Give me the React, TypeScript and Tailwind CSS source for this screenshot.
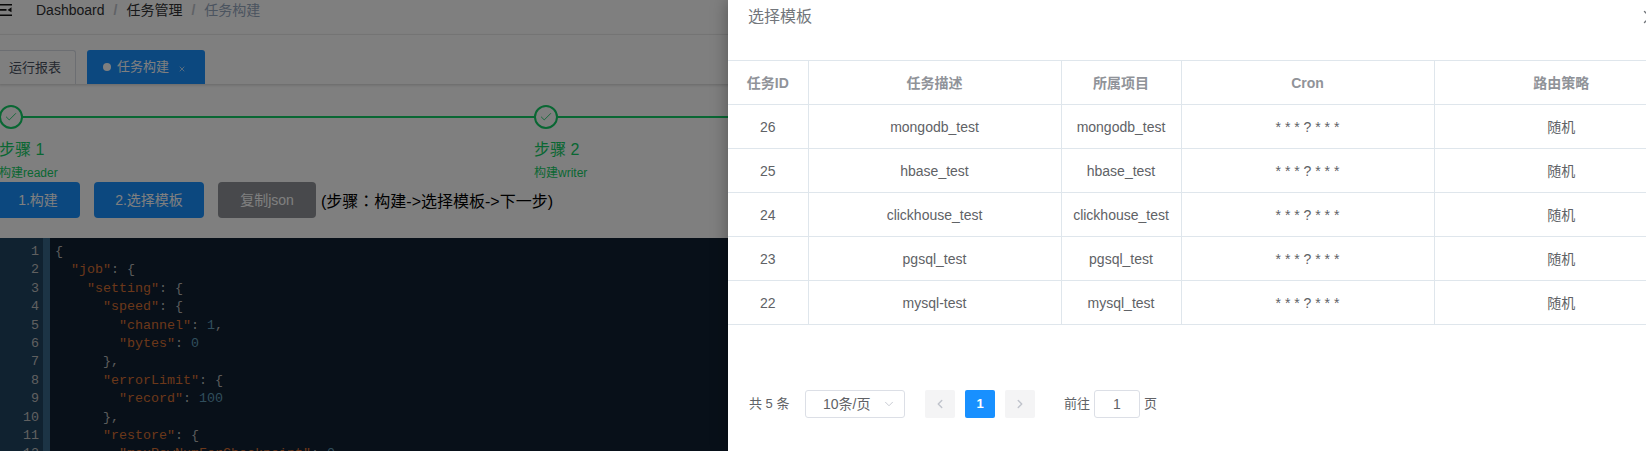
import { Check, ChevronDown, ChevronLeft, ChevronRight, X } from "lucide-react";

const rows = [
  { id: 26, desc: "mongodb_test", project: "mongodb_test" },
  { id: 25, desc: "hbase_test", project: "hbase_test" },
  { id: 24, desc: "clickhouse_test", project: "clickhouse_test" },
  { id: 23, desc: "pgsql_test", project: "pgsql_test" },
  { id: 22, desc: "mysql-test", project: "mysql_test" },
];

type Piece = { t: string; c?: "s" | "n" };

const code: Piece[][] = [
  [{ t: "{" }],
  [{ t: "  " }, { t: '"job"', c: "s" }, { t: ": {" }],
  [{ t: "    " }, { t: '"setting"', c: "s" }, { t: ": {" }],
  [{ t: "      " }, { t: '"speed"', c: "s" }, { t: ": {" }],
  [{ t: "        " }, { t: '"channel"', c: "s" }, { t: ": " }, { t: "1", c: "n" }, { t: "," }],
  [{ t: "        " }, { t: '"bytes"', c: "s" }, { t: ": " }, { t: "0", c: "n" }],
  [{ t: "      }," }],
  [{ t: "      " }, { t: '"errorLimit"', c: "s" }, { t: ": {" }],
  [{ t: "        " }, { t: '"record"', c: "s" }, { t: ": " }, { t: "100", c: "n" }],
  [{ t: "      }," }],
  [{ t: "      " }, { t: '"restore"', c: "s" }, { t: ": {" }],
  [{ t: "        " }, { t: '"maxRowNumForCheckpoint"', c: "s" }, { t: ": " }, { t: "0", c: "n" }, { t: "," }],
];

function Step({ title, desc }: { title: string; desc: string }) {
  return (
    <div className="w-[535px] shrink-0">
      <div className="relative h-6">
        <div className="absolute left-0 right-0 top-[11px] h-[2px] bg-[#13ce66]" />
        <div className="relative flex h-6 w-6 items-center justify-center rounded-full border-2 border-[#13ce66] bg-[#fff]">
          <Check size={14} strokeWidth={1.5} className="text-[#13ce66]" />
        </div>
      </div>
      <div className="mt-[2px] text-base leading-[38px] text-[#13ce66]">{title}</div>
      <div className="-mt-[6px] text-xs leading-[20px] text-[#13ce66]">{desc}</div>
    </div>
  );
}

export default function App() {
  return (
    <div className="relative h-[451px] w-[1646px] overflow-hidden bg-white font-['Liberation_Sans','Noto_Sans_CJK_SC',sans-serif]">
      {/* page behind the drawer, scrolled a little to the right and down */}
      <div className="-mt-[15px] -ml-[1px] w-[1647px]">
        <div className="flex h-[50px] items-center border-b border-[#f0f0f0] pl-[1px]">
          <svg width="12" height="14" viewBox="0 0 12 14" className="shrink-0 text-[#111]">
            <path d="M0 1h12v1.6H0zM0 6h6.5v1.8H0zM0 11.4h12V13H0z" fill="currentColor" />
            <path d="M11.5 4.2v5L7.5 6.9z" fill="currentColor" />
          </svg>
          <div className="ml-[24px] flex items-center pt-px text-sm text-[#303133]">
            <span>Dashboard</span>
            <span className="mx-[9px] font-bold text-[#c0c4cc]">/</span>
            <span>任务管理</span>
            <span className="mx-[9px] font-bold text-[#c0c4cc]">/</span>
            <span className="text-[#97a8be]">任务构建</span>
          </div>
        </div>
        <div className="flex h-[49px] items-end gap-[11px] shadow-[0_1px_3px_rgba(0,0,0,0.2)]">
          <div className="-ml-[20px] flex h-[34px] w-[97px] items-center justify-end rounded-t-[3px] border border-b-0 border-[#d8dce5] pr-[14px] text-[13px] text-[#495060]">
            运行报表
          </div>
          <div className="flex h-[34px] w-[118px] items-center rounded-t-[3px] bg-[#1890ff] pl-[16px] text-[13px] text-white">
            <span className="mr-[6px] h-2 w-2 rounded-full bg-white" />
            任务构建
            <X size={8} strokeWidth={2} className="ml-[9px] mt-[3px]" />
          </div>
        </div>
        <div className="mt-[21px] flex">
          <Step title="步骤 1" desc="构建reader" />
          <Step title="步骤 2" desc="构建writer" />
          <Step title="步骤 3" desc="构建" />
        </div>
        <div className="mt-[-1px] flex h-[56px] items-start">
          <button className="-ml-[3px] h-9 w-[84px] rounded-[4px] bg-[#1890ff] text-sm text-white">1.构建</button>
          <button className="ml-[14px] h-9 w-[110px] rounded-[4px] bg-[#1890ff] text-sm text-white">2.选择模板</button>
          <button className="ml-[14px] h-9 w-[98px] rounded-[4px] bg-[#909399] text-sm text-white">复制json</button>
          <span className="ml-[5px] text-base leading-9 text-black">
            (步骤<span className="font-['Noto_Sans_CJK_TC',sans-serif]">：</span>构建-&gt;选择模板-&gt;下一步)
          </span>
        </div>
        <div className="flex h-[213px] overflow-hidden bg-[#102032] font-['Liberation_Mono',monospace] text-[13.33px] leading-[18.4px]">
          <div className="w-[51px] shrink-0 border-r-[7px] border-[#38688a] bg-[#204460] pt-[5px]">
            {code.map((_, i) => (
              <div key={i} className="pr-[4px] text-right text-[#c0c0c0]">
                {i + 1}
              </div>
            ))}
          </div>
          <pre className="pt-[5px] pl-[5px] font-['Liberation_Mono',monospace] text-[#b8b8b8]">
            {code.map((line, i) => (
              <div key={i}>
                {line.map((p, j) => (
                  <span key={j} className={p.c === "s" ? "text-[#d87034]" : p.c === "n" ? "text-[#609cb8]" : ""}>
                    {p.t}
                  </span>
                ))}
              </div>
            ))}
          </pre>
        </div>
      </div>

      {/* overlay + drawer */}
      <div className="absolute inset-0 bg-black/50" />
      <div className="absolute top-0 bottom-0 left-[728px] w-[960px] bg-white shadow-[0_0_16px_rgba(0,0,0,0.35)]">
        <div className="flex h-[60px] items-start justify-between pt-[5px] pr-[27px] pl-5 text-base leading-6 text-[#72767b]">
          <span>选择模板</span>
          <X size={22} strokeWidth={1.5} className="mt-px" />
        </div>
        <table className="w-[960px] table-fixed border-collapse text-center text-sm text-[#606266]">
          <colgroup>
            <col className="w-[80px]" />
            <col className="w-[253px]" />
            <col className="w-[120px]" />
            <col className="w-[253px]" />
            <col className="w-[254px]" />
          </colgroup>
          <thead>
            <tr className="h-[44px] border-y border-[#dfe6ec] text-sm font-bold text-[#909399]">
              <th className="border-r border-[#dfe6ec]">任务ID</th>
              <th className="border-r border-[#dfe6ec]">任务描述</th>
              <th className="border-r border-[#dfe6ec]">所属项目</th>
              <th className="border-r border-[#dfe6ec]">Cron</th>
              <th>路由策略</th>
            </tr>
          </thead>
          <tbody>
            {rows.map((r) => (
              <tr key={r.id} className="h-[44px] border-b border-[#dfe6ec]">
                <td className="border-r border-[#dfe6ec]">{r.id}</td>
                <td className="border-r border-[#dfe6ec]">{r.desc}</td>
                <td className="border-r border-[#dfe6ec]">{r.project}</td>
                <td className="border-r border-[#dfe6ec]">* * * ? * * *</td>
                <td>随机</td>
              </tr>
            ))}
          </tbody>
        </table>
        <div className="mt-[65px] flex h-7 items-center pl-[21px] text-[13px] text-[#606266]">
          <span className="w-[56px]">共 5 条</span>
          <div className="flex h-7 w-[100px] items-center rounded-[3px] border border-[#dcdfe6] pl-[17px] text-sm">
            <span>10条/页</span>
            <ChevronDown size={14} strokeWidth={1.5} className="ml-[12px] text-[#c0c4cc]" />
          </div>
          <button className="ml-5 flex h-7 w-[30px] items-center justify-center rounded-[2px] bg-[#f4f4f5] text-[#c0c4cc]">
            <ChevronLeft size={14} strokeWidth={2.5} />
          </button>
          <button className="ml-[10px] flex h-7 w-[30px] items-center justify-center rounded-[2px] bg-[#1890ff] font-bold text-white">
            1
          </button>
          <button className="ml-[10px] flex h-7 w-[30px] items-center justify-center rounded-[2px] bg-[#f4f4f5] text-[#c0c4cc]">
            <ChevronRight size={14} strokeWidth={2.5} />
          </button>
          <span className="ml-[29px]">前往</span>
          <div className="ml-[4px] flex h-7 w-[46px] items-center justify-center rounded-[3px] border border-[#dcdfe6] text-sm">1</div>
          <span className="ml-[4px]">页</span>
        </div>
      </div>
    </div>
  );
}
